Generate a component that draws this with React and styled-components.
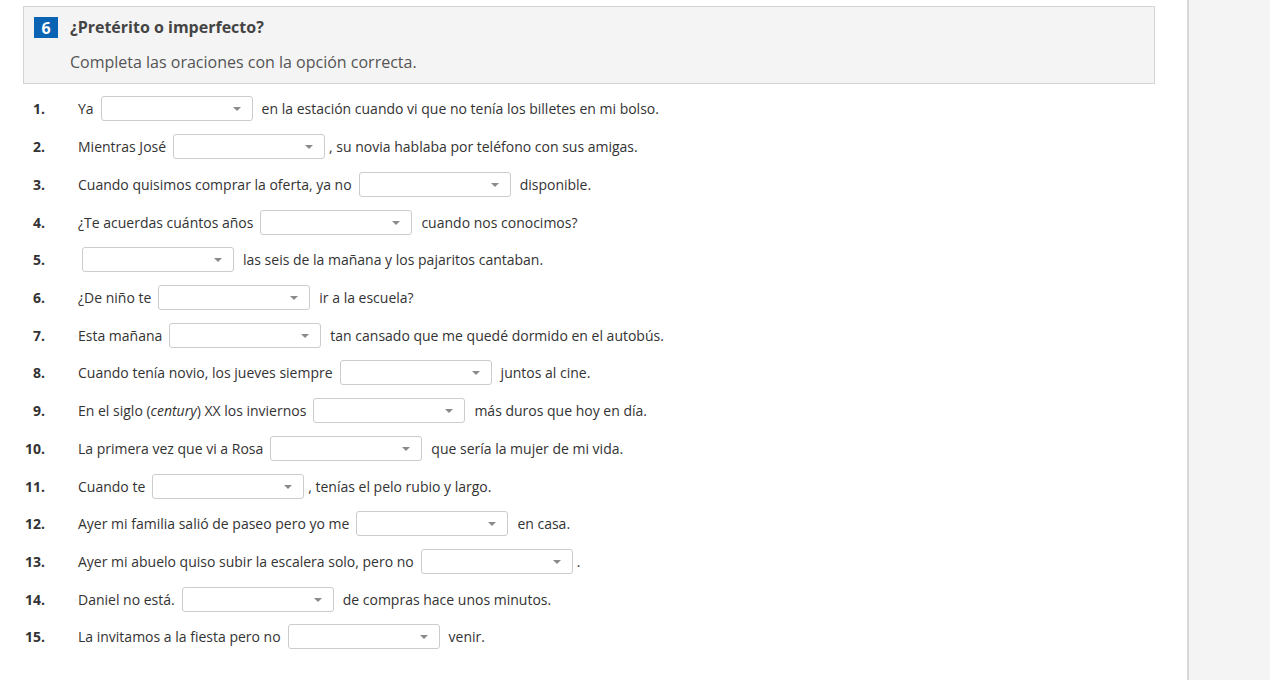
import React from "react";
import styled, { createGlobalStyle } from "styled-components";

const GlobalStyle = createGlobalStyle`
  html, body {
    margin: 0;
    padding: 0;
    background: #ffffff;
  }
  body {
    font-family: "Open Sans", "Noto Sans", Arial, sans-serif;
    color: #333333;
  }
`;

const Page = styled.div`
  display: flex;
  width: 1270px;
  height: 680px;
  overflow: hidden;
`;

const Main = styled.main`
  width: 1187px;
  padding: 6px 32px 0 23px;
  box-sizing: border-box;
`;

const Sidebar = styled.aside`
  flex: 1;
  background: #f4f4f4;
  border-left: 2px solid #d8d8d8;
`;

const Header = styled.header`
  background: #f4f4f4;
  border: 1px solid #d4d4d4;
  height: 78px;
  box-sizing: border-box;
  padding: 9px 10px 0 10px;
`;

const TitleRow = styled.div`
  display: flex;
  align-items: center;
  gap: 12px;
`;

const Badge = styled.span`
  display: inline-flex;
  align-items: center;
  justify-content: center;
  width: 24px;
  height: 21px;
  margin-top: 1px;
  background: #0a63b3;
  color: #ffffff;
  font-weight: 700;
  font-size: 16px;
`;

const Title = styled.h2`
  margin: 0;
  font-size: 16px;
  font-weight: 700;
  color: #444444;
`;

const Subtitle = styled.p`
  margin: 13px 0 0 36px;
  font-size: 16px;
  color: #555555;
`;

const List = styled.ol`
  list-style: none;
  margin: 6px 0 0 0;
  padding: 0;
`;

const Row = styled.li`
  display: flex;
  align-items: center;
  height: 37.72px;
  font-size: 14px;
  color: #333333;
`;

const Num = styled.span`
  width: 22px;
  text-align: right;
  font-weight: 700;
  margin-right: 33px;
`;

const Sentence = styled.span`
  display: flex;
  align-items: center;
  gap: 8px;
  white-space: pre;
`;

const SelectBox = styled.span`
  position: relative;
  display: inline-block;
  width: 152px;
  height: 25px;
  box-sizing: border-box;
  border: 1px solid #cccccc;
  border-radius: 3px;
  background: #ffffff;
  margin-left: ${(p) => (p.$lead ? "4px" : "-1px")};
  margin-right: ${(p) => (p.$tight ? "-4px" : "1px")};

  &::after {
    content: "";
    position: absolute;
    right: 11px;
    top: 10px;
    border-left: 4px solid transparent;
    border-right: 4px solid transparent;
    border-top: 4px solid #8a8a8a;
  }
`;

const items = [
  ["Ya", "en la estación cuando vi que no tenía los billetes en mi bolso."],
  ["Mientras José", ", su novia hablaba por teléfono con sus amigas."],
  ["Cuando quisimos comprar la oferta, ya no", "disponible."],
  ["¿Te acuerdas cuántos años", "cuando nos conocimos?"],
  ["", "las seis de la mañana y los pajaritos cantaban."],
  ["¿De niño te", "ir a la escuela?"],
  ["Esta mañana", "tan cansado que me quedé dormido en el autobús."],
  ["Cuando tenía novio, los jueves siempre", "juntos al cine."],
  [
    <>
      En el siglo (<i>century</i>) XX los inviernos
    </>,
    "más duros que hoy en día.",
  ],
  ["La primera vez que vi a Rosa", "que sería la mujer de mi vida."],
  ["Cuando te", ", tenías el pelo rubio y largo."],
  ["Ayer mi familia salió de paseo pero yo me", "en casa."],
  ["Ayer mi abuelo quiso subir la escalera solo, pero no", "."],
  ["Daniel no está.", "de compras hace unos minutos."],
  ["La invitamos a la fiesta pero no", "venir."],
];

export default function App() {
  return (
    <>
      <GlobalStyle />
      <Page>
        <Main>
          <Header>
            <TitleRow>
              <Badge>6</Badge>
              <Title>¿Pretérito o imperfecto?</Title>
            </TitleRow>
            <Subtitle>Completa las oraciones con la opción correcta.</Subtitle>
          </Header>
          <List>
            {items.map(([before, after], i) => (
              <Row key={i}>
                <Num>{i + 1}.</Num>
                <Sentence>
                  {before !== "" && <span>{before}</span>}
                  <SelectBox
                    $lead={before === ""}
                    $tight={after.startsWith(",") || after === "."}
                  />
                  <span>{after}</span>
                </Sentence>
              </Row>
            ))}
          </List>
        </Main>
        <Sidebar />
      </Page>
    </>
  );
}
